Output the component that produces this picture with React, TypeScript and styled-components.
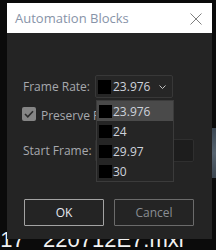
import styled, { createGlobalStyle } from "styled-components";

const GlobalStyle = createGlobalStyle`
  html, body {
    margin: 0;
    padding: 0;
    background: #0b0b0b;
  }
  body {
    font-family: "Open Sans", "Noto Sans", sans-serif;
  }
`;

const rates = ["23.976", "24", "29.97", "30"];

const Desktop = styled.div`
  position: relative;
  width: 216px;
  height: 250px;
  overflow: hidden;
  background: #0b0b0b;
`;

const Thumb = styled.div`
  position: absolute;
  left: 212px;
  top: 128px;
  width: 10px;
  height: 50px;
  background: linear-gradient(180deg, #3a4652 0%, #56636f 50%, #3c4650 100%);
`;

const FileName = styled.div`
  position: absolute;
  left: -12px;
  top: 229px;
  font-family: "Liberation Sans", sans-serif;
  font-size: 22px;
  line-height: 22px;
  color: #f2f2f2;
  white-space: pre;
`;

const Window = styled.section`
  position: absolute;
  left: 7px;
  top: 3px;
  width: 205px;
  height: 236px;
  background: #242424;
  display: flex;
  flex-direction: column;
`;

const TitleBar = styled.header`
  height: 30px;
  background: #ffffff;
  display: flex;
  align-items: center;
  justify-content: space-between;
  padding: 0 10px 0 8px;
`;

const Title = styled.h1`
  margin: 0;
  font-size: 13px;
  font-weight: 400;
  color: #8793a8;
`;

const CloseButton = styled.button`
  width: 12px;
  height: 12px;
  padding: 0;
  border: none;
  background: none;
  display: flex;
  margin-top: 2px;
`;

const Form = styled.div`
  position: relative;
  flex: 1;
  display: flex;
  flex-direction: column;
  padding: 42px 18px 0 16px;
`;

const FieldRow = styled.div<{ $gap: number }>`
  display: flex;
  align-items: center;
  height: 23px;
  margin-top: ${({ $gap }) => $gap}px;
`;

const Label = styled.span`
  width: 72px;
  font-size: 12px;
  color: #a7a9ae;
  white-space: nowrap;
`;

const Select = styled.div`
  width: 78px;
  height: 23px;
  box-sizing: border-box;
  border: 1px solid #383838;
  border-radius: 2px;
  background: #262626;
  display: flex;
  align-items: center;
  padding: 0 6px 0 2px;
`;

const Swatch = styled.span`
  width: 13px;
  height: 14px;
  background: #000;
  flex: none;
`;

const Value = styled.span`
  flex: 1;
  margin-left: 2px;
  font-size: 12px;
  color: #cfd3dc;
`;

const CheckRow = styled.label`
  display: flex;
  align-items: center;
  height: 14px;
  margin-top: 9px;
  margin-left: -1px;
`;

const Check = styled.span`
  width: 14px;
  height: 14px;
  border-radius: 2px;
  background: #858585;
  display: flex;
  align-items: center;
  justify-content: center;
`;

const CheckText = styled.span`
  margin-left: 5px;
  margin-top: 3px;
  font-size: 12px;
  color: #a7a9ae;
  white-space: nowrap;
`;

const Input = styled.div`
  width: 100px;
  height: 23px;
  box-sizing: border-box;
  border: 1px solid #2f2f2f;
  border-radius: 2px;
  background: #1d1d1d;
`;

const Buttons = styled.div`
  display: flex;
  gap: 10px;
  margin-top: 37px;
  padding-left: 1px;
`;

const Button = styled.button<{ $primary?: boolean }>`
  width: 80px;
  height: 27px;
  box-sizing: border-box;
  background: transparent;
  border: 1px solid ${({ $primary }) => ($primary ? "#a3a3a3" : "#6b6b6b")};
  border-radius: 1px;
  font-family: "Open Sans", "Noto Sans", sans-serif;
  font-size: 12px;
  color: ${({ $primary }) => ($primary ? "#e6e9f0" : "#8a8d93")};
  padding: 0;
`;

const Menu = styled.ul`
  position: absolute;
  left: 89px;
  top: 67px;
  width: 78px;
  margin: 0;
  padding: 0;
  box-sizing: border-box;
  list-style: none;
  background: #252525;
  border: 1px solid #3b3b3b;
`;

const MenuItem = styled.li<{ $active?: boolean }>`
  height: 20px;
  display: flex;
  align-items: center;
  padding-left: 2px;
  background: ${({ $active }) => ($active ? "#4a4a4a" : "transparent")};
`;

const MenuSwatch = styled.span`
  width: 13px;
  height: 13px;
  background: #000;
  flex: none;
`;

const MenuText = styled.span`
  margin-left: 1px;
  font-size: 12px;
  color: #cfd3dc;
`;

export default function App() {
  return (
    <>
      <GlobalStyle />
      <Desktop>
        <Thumb />
        <FileName>{"017   220712E7.mxl"}</FileName>
        <Window>
          <TitleBar>
            <Title>Automation Blocks</Title>
            <CloseButton aria-label="Close">
              <svg width="12" height="12" viewBox="0 0 12 12">
                <path d="M0.5 0.5 L11.5 11.5 M11.5 0.5 L0.5 11.5" stroke="#7f7f7f" strokeWidth="1" fill="none" />
              </svg>
            </CloseButton>
          </TitleBar>
          <Form>
            <FieldRow $gap={0}>
              <Label>Frame Rate:</Label>
              <Select>
                <Swatch />
                <Value>23.976</Value>
                <svg width="7" height="4" viewBox="0 0 7 4">
                  <path d="M0.5 0.5 L3.5 3.5 L6.5 0.5" stroke="#c4c4c4" strokeWidth="1" fill="none" />
                </svg>
              </Select>
            </FieldRow>
            <CheckRow>
              <Check>
                <svg width="10" height="8" viewBox="0 0 10 8">
                  <path d="M1 4 L3.8 6.8 L9 1.2" stroke="#2b2b2b" strokeWidth="1.6" fill="none" />
                </svg>
              </Check>
              <CheckText>Preserve Rate</CheckText>
            </CheckRow>
            <FieldRow $gap={18}>
              <Label>Start Frame:</Label>
              <Input />
            </FieldRow>
            <Buttons>
              <Button $primary>OK</Button>
              <Button>Cancel</Button>
            </Buttons>
            <Menu>
              {rates.map((r, i) => (
                <MenuItem key={r} $active={i === 0}>
                  <MenuSwatch />
                  <MenuText>{r}</MenuText>
                </MenuItem>
              ))}
            </Menu>
          </Form>
        </Window>
      </Desktop>
    </>
  );
}
